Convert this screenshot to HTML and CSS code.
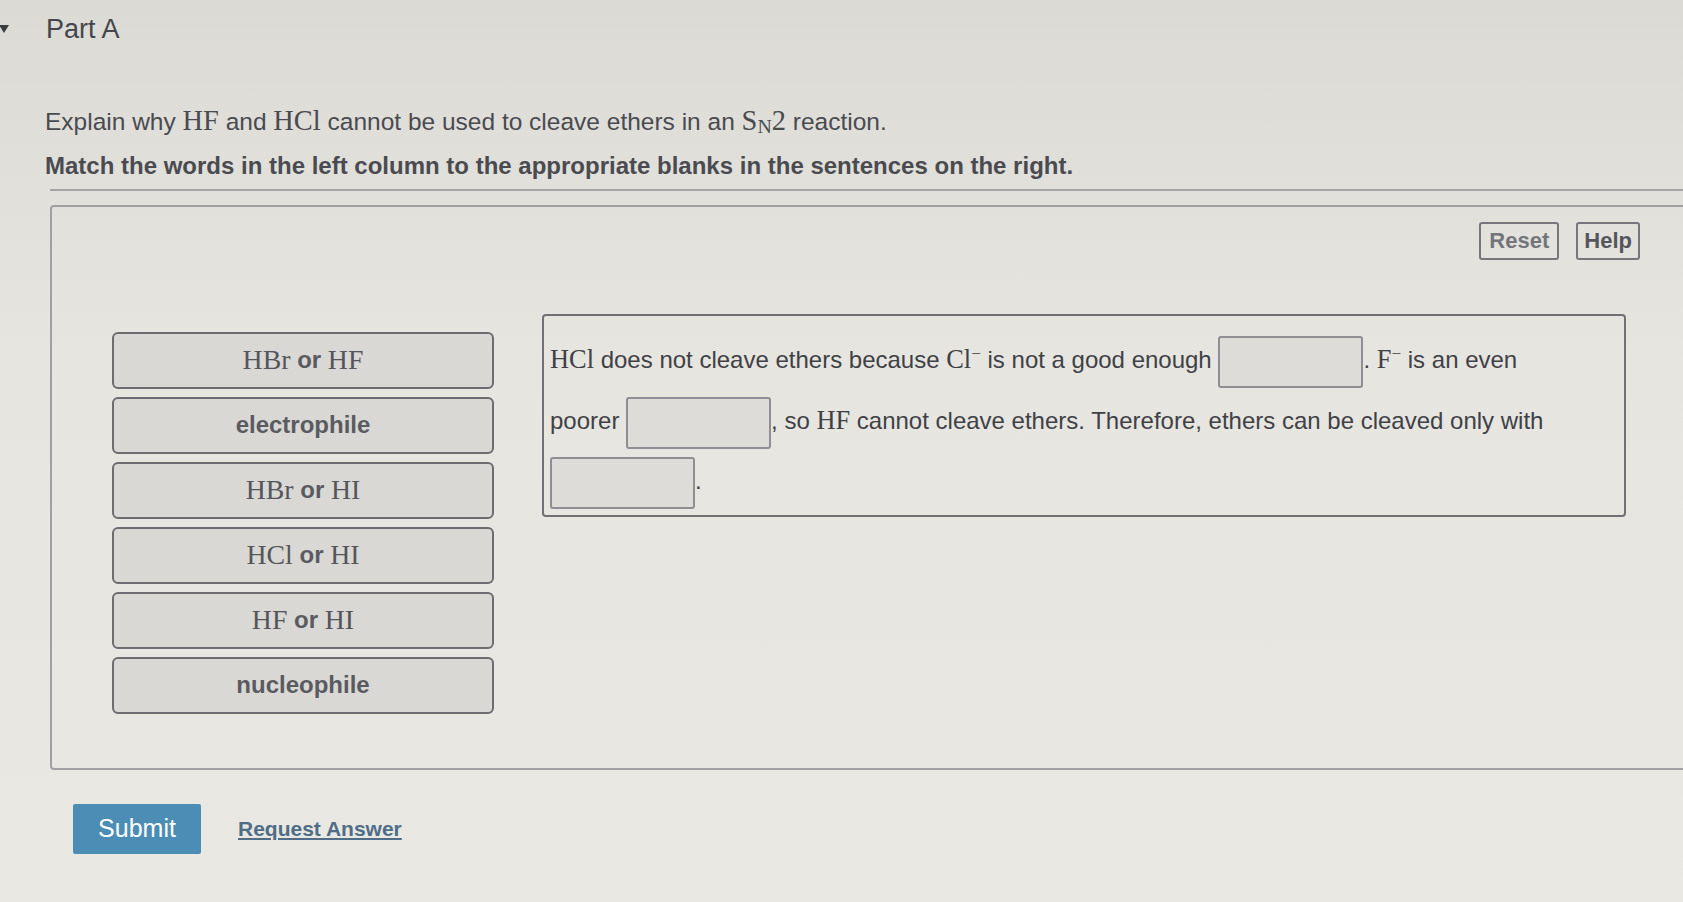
FILE: index.html
```html
<!DOCTYPE html>
<html lang="en">
<head>
    <meta charset="UTF-8">
    <meta name="viewport" content="width=device-width, initial-scale=1.0">
    <title>Part A</title>
    <link rel="stylesheet" href="styles.css">
</head>
<body>
    <div class="part-head">
        <span class="caret"></span>
        <h2 class="part-title">Part A</h2>
    </div>

    <div class="prompt">
        <p class="question">Explain why <span class="chem">HF</span> and <span class="chem">HCl</span> cannot be used to cleave ethers in an <span class="chem">S<sub>N</sub>2</span> reaction.</p>
        <p class="instruction">Match the words in the left column to the appropriate blanks in the sentences on the right.</p>
    </div>

    <hr class="divider">

    <div class="workspace">
        <div class="tools">
            <button class="tool-btn muted">Reset</button>
            <button class="tool-btn">Help</button>
        </div>

        <div class="match-area">
            <div class="choices">
                <div class="choice"><span class="chem">HBr</span>&nbsp;or&nbsp;<span class="chem">HF</span></div>
                <div class="choice">electrophile</div>
                <div class="choice"><span class="chem">HBr</span>&nbsp;or&nbsp;<span class="chem">HI</span></div>
                <div class="choice"><span class="chem">HCl</span>&nbsp;or&nbsp;<span class="chem">HI</span></div>
                <div class="choice"><span class="chem">HF</span>&nbsp;or&nbsp;<span class="chem">HI</span></div>
                <div class="choice">nucleophile</div>
            </div>

            <div class="sentences">
                <span class="chem">HCl</span> does not cleave ethers because <span class="chem">Cl<sup>−</sup></span> is not a good enough <span class="blank"></span>. <span class="chem">F<sup>−</sup></span> is an even<br>
                poorer <span class="blank"></span>, so <span class="chem">HF</span> cannot cleave ethers. Therefore, ethers can be cleaved only with<br>
                <span class="blank"></span>.
            </div>
        </div>
    </div>

    <div class="actions">
        <button class="submit">Submit</button>
        <a class="request" href="#">Request Answer</a>
    </div>
</body>
</html>
```

FILE: styles.css
```css
* {
    margin: 0;
    padding: 0;
    box-sizing: border-box;
}

body {
    font-family: 'Liberation Sans', Arial, sans-serif;
    background: linear-gradient(to bottom, #dbdad5, #e6e5e0 40%, #e9e8e3);
    color: #4a4b50;
    min-height: 100vh;
    overflow: hidden;
}

.chem {
    font-family: 'Liberation Serif', 'Times New Roman', serif;
    font-size: 1.1em;
}

.chem sub {
    font-size: 0.7em;
    vertical-align: -0.15em;
}

.chem sup {
    font-size: 0.65em;
    vertical-align: 0.55em;
}

.part-head {
    display: flex;
    align-items: center;
    height: 58px;
}

.caret {
    width: 0;
    height: 0;
    border-left: 5px solid transparent;
    border-right: 5px solid transparent;
    border-top: 8px solid #3b3c40;
    margin-left: -1px;
}

.part-title {
    font-size: 27px;
    font-weight: normal;
    margin-left: 37px;
    color: #45464b;
}

.prompt {
    padding-left: 45px;
    margin-top: 48px;
}

.question {
    font-size: 24.5px;
    line-height: 30px;
}

.question .chem {
    font-size: 1.16em;
}

.instruction {
    font-size: 24px;
    font-weight: bold;
    line-height: 30px;
    margin-top: 10px;
}

.divider {
    border: none;
    border-top: 2px solid #a4a4a4;
    margin: 8px 0 0 50px;
}

.workspace {
    margin: 14px 0 0 50px;
    width: 1640px;
    border: 2px solid #a0a0a2;
    border-radius: 4px;
    padding: 15px 48px 54px 60px;
}

.tools {
    display: flex;
    justify-content: flex-end;
    gap: 17px;
}

.tool-btn {
    font-family: 'Liberation Sans', Arial, sans-serif;
    font-size: 22px;
    font-weight: bold;
    color: #55565c;
    background: transparent;
    border: 2px solid #76767b;
    border-radius: 3px;
    height: 38px;
    padding: 0 6px;
}

.tool-btn.muted {
    color: #74757b;
    width: 80px;
}

.match-area {
    display: flex;
    align-items: flex-start;
    margin-top: 54px;
}

.choices {
    display: flex;
    flex-direction: column;
    gap: 8px;
    width: 382px;
    margin-top: 18px;
}

.choice {
    height: 57px;
    display: flex;
    justify-content: center;
    align-items: center;
    background-color: #d9d8d4;
    border: 2px solid #6c6c71;
    border-radius: 6px;
    font-size: 24px;
    font-weight: bold;
    color: #5a5b61;
}

.choice .chem {
    font-weight: normal;
    font-size: 1.16em;
    color: #55565b;
}

.sentences {
    margin-left: 48px;
    width: 1084px;
    border: 2px solid #707075;
    border-radius: 4px;
    padding: 8px 6px 4px;
    font-size: 24px;
    line-height: 60px;
    color: #404146;
}

.blank {
    display: inline-block;
    width: 145px;
    height: 52px;
    vertical-align: middle;
    background-color: #dddcd8;
    border: 2px solid #8e8e93;
    border-radius: 3px;
}

.actions {
    display: flex;
    align-items: center;
    margin: 34px 0 0 73px;
    gap: 37px;
}

.submit {
    font-family: 'Liberation Sans', Arial, sans-serif;
    font-size: 25px;
    color: #fff;
    background-color: #4b8db5;
    border: none;
    border-radius: 2px;
    width: 128px;
    height: 50px;
}

.request {
    font-size: 21px;
    font-weight: bold;
    color: #4f6d87;
    text-decoration: underline;
}
```
